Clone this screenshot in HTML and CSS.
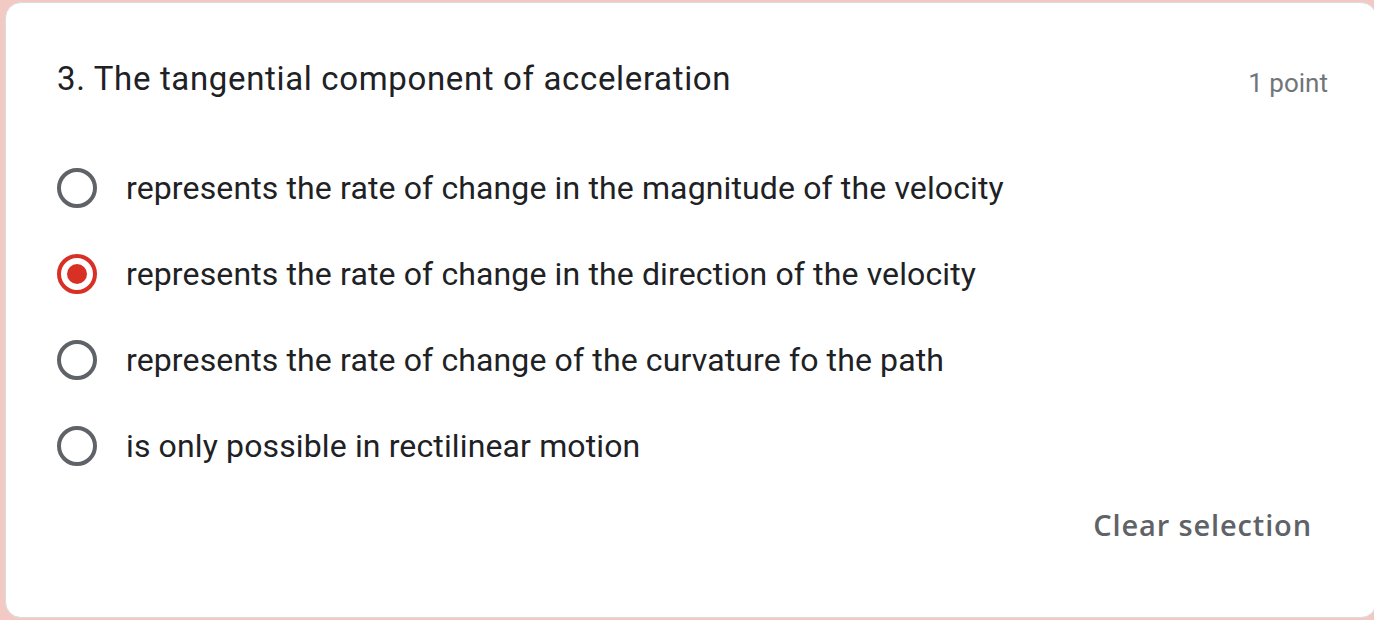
FILE: index.html
```html
<!DOCTYPE html>
<html>
<head>
<meta charset="utf-8">
<link rel="stylesheet" href="styles.css">
</head>
<body>
<div class="card">
  <div class="header">
    <div class="title">3. The tangential component of acceleration</div>
    <div class="points">1 point</div>
  </div>
  <div class="options">
    <div class="option">
      <span class="radio"></span>
      <span class="label">represents the rate of change in the magnitude of the velocity</span>
    </div>
    <div class="option">
      <span class="radio checked"><span class="dot"></span></span>
      <span class="label">represents the rate of change in the direction of the velocity</span>
    </div>
    <div class="option">
      <span class="radio"></span>
      <span class="label">represents the rate of change of the curvature fo the path</span>
    </div>
    <div class="option">
      <span class="radio"></span>
      <span class="label">is only possible in rectilinear motion</span>
    </div>
  </div>
  <div class="footer">
    <span class="clear">Clear selection</span>
  </div>
</div>
</body>
</html>
```

FILE: styles.css
```css
html, body {
  margin: 0;
  padding: 0;
}
body {
  width: 1374px;
  height: 620px;
  overflow: hidden;
  background: #f3c9c4;
  font-family: Roboto, "Liberation Sans", sans-serif;
}
.card {
  box-sizing: border-box;
  margin: 2px 0 0 5px;
  width: 1372px;
  height: 616px;
  background: #ffffff;
  border: 1px solid #dadce0;
  border-radius: 16px;
  padding: 52px 48px 0 51px;
}
.header {
  display: flex;
  justify-content: space-between;
  align-items: flex-start;
}
.title {
  font-size: 33px;
  line-height: 48px;
  letter-spacing: 0.65px;
  color: #202124;
}
.points {
  font-size: 26px;
  line-height: 32px;
  color: #70757a;
  padding-top: 12px;
}
.options {
  margin-top: 55px;
  display: flex;
  flex-direction: column;
  gap: 26px;
}
.option {
  display: flex;
  align-items: center;
  height: 60px;
}
.radio {
  box-sizing: border-box;
  width: 40px;
  height: 40px;
  border: 4px solid #5f6368;
  border-radius: 50%;
  display: flex;
  align-items: center;
  justify-content: center;
  flex-shrink: 0;
}
.radio.checked {
  border-color: #d93025;
}
.dot {
  width: 20px;
  height: 20px;
  border-radius: 50%;
  background: #d93025;
}
.label {
  margin-left: 29px;
  font-size: 32px;
  line-height: 40px;
  letter-spacing: 0.13px;
  color: #202124;
}
.footer {
  display: flex;
  justify-content: flex-end;
  margin-top: 29px;
  padding-right: 16px;
}
.clear {
  font-family: "Open Sans", Roboto, sans-serif;
  font-weight: 600;
  font-size: 29px;
  line-height: 40px;
  color: #5f6368;
  letter-spacing: 0.87px;
}
```
